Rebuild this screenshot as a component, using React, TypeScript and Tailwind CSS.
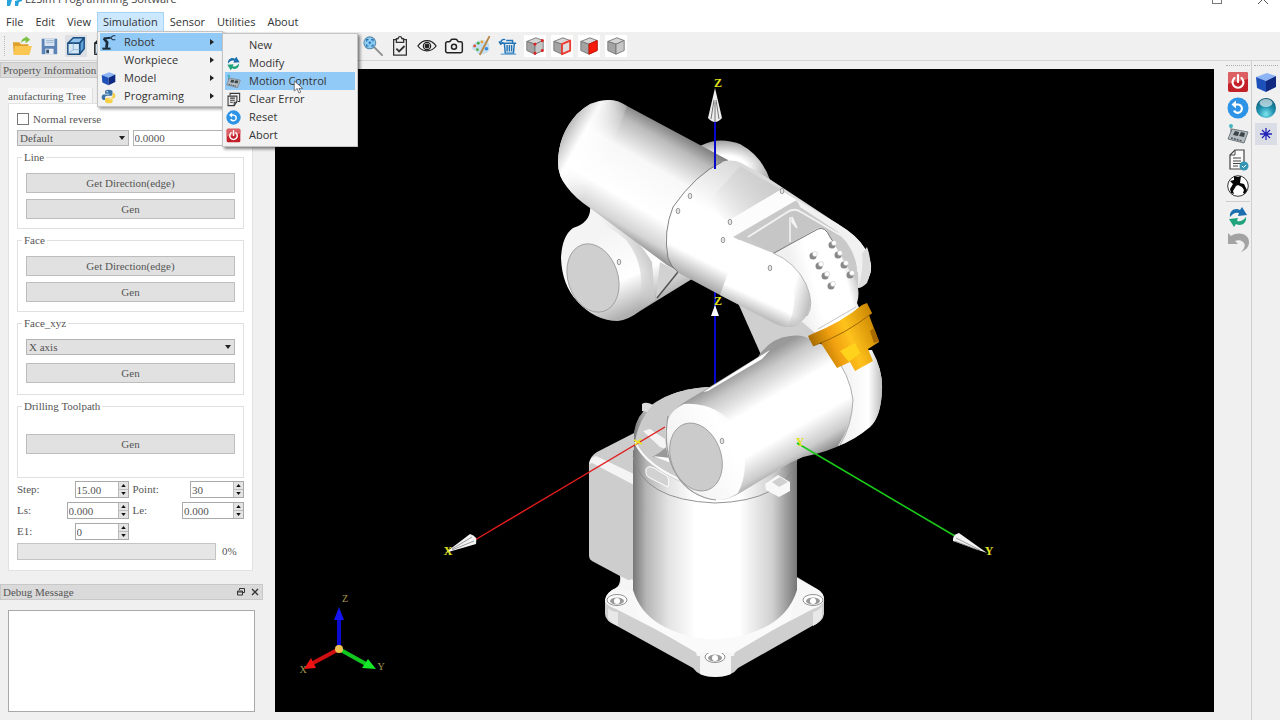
import { ReactNode } from "react";
import clsx from "clsx";
import { Camera } from "lucide-react";

function CubeIcon({
  top,
  left,
  right,
  stroke,
  children,
}: {
  top: string;
  left: string;
  right: string;
  stroke?: string;
  children?: ReactNode;
}) {
  return (
    <svg viewBox="0 0 22 22" className="h-full w-full" stroke={stroke} strokeLinejoin="round">
      <path d="M2 6 12 2l8 3-9 4z" fill={top} />
      <path d="M2 6l9 3v11l-9-4z" fill={left} />
      <path d="M11 9l9-4v11l-9 4z" fill={right} />
      {children}
    </svg>
  );
}

function BlueCube() {
  return (
    <svg viewBox="0 0 22 22" className="h-full w-full">
      <path d="M1 6 12 2l9 3-10 5z" fill="#8db5f5" />
      <path d="M1 6l10 4v11L2 17z" fill="#1d50b8" />
      <path d="M11 10l10-5v11l-10 5z" fill="#0f2a80" />
    </svg>
  );
}

function GreyCube({ children }: { children?: ReactNode }) {
  return (
    <CubeIcon top="#d6d6d6" left="#a3a3a3" right="#c6c6c6" stroke="#777">
      {children}
    </CubeIcon>
  );
}

function WireCube({ color }: { color: string }) {
  return (
    <svg viewBox="0 0 22 22" className="h-full w-full" stroke={color} strokeWidth="1.6" strokeLinejoin="round">
      <path d="M2 8l6-6h12l-5 6z" fill="#8fc1ea" />
      <path d="M15 8l5-6v12l-5 6z" fill="#5fa3da" />
      <path d="M2 8h13v12H2z" fill="#d3e6f6" />
      <path d="M8 8v7h7M8 15l-6 5" fill="none" stroke="#7fa9cc" strokeWidth="0.8" />
    </svg>
  );
}

function FolderIcon() {
  return (
    <svg viewBox="0 0 22 22" className="h-full w-full">
      <path d="M1 7h7l2 2h8v12H2z" fill="#e0a12c" />
      <path d="M3 11h19l-3 10H2z" fill="#fbc751" />
      <path d="M10 8c0-4 3-6 5-6V0l5 4-5 4V5c-2 0-4 1-5 3z" fill="#7ac143" />
    </svg>
  );
}

function SaveIcon() {
  return (
    <svg viewBox="0 0 22 22" className="h-full w-full">
      <path d="M3 3h17v17H3z" fill="#5c83b5" />
      <path d="M6 3h11v8H6z" fill="#d7e3f1" />
      <path d="M7 14h9v6H7z" fill="#e9eef5" />
      <path d="M8 15h3v4H8z" fill="#33506f" />
      <path d="M8 5h8M8 7h8" stroke="#9db5d2" />
    </svg>
  );
}

function MagnifierIcon() {
  return (
    <svg viewBox="0 0 22 22" className="h-full w-full">
      <path d="M12 12l9 9" stroke="#8c8c8c" strokeWidth="2" strokeLinecap="round" />
      <circle cx="7.500" cy="7.500" r="6.500" fill="#8fcdf3" stroke="#5f8fae" strokeWidth="1.2" />
      <path d="M6 4H4v2M9 4h2v2M6 11H4V9M9 11h2V9M6 7.500h3M7.500 6v3" fill="none" stroke="#1f6fb5" strokeWidth="1.200" />
    </svg>
  );
}

function ClipboardIcon() {
  return (
    <svg viewBox="0 0 22 22" className="h-full w-full" fill="none" stroke="#333" strokeWidth="1.400">
      <path d="M8 4H4v17h14V4h-4" />
      <path d="M7 3h2c0-3 4-3 4 0h2v4H7z" />
      <path d="M7 14l3 3 6-6" strokeWidth="2" />
    </svg>
  );
}

function EyeIcon() {
  return (
    <svg viewBox="0 0 22 22" className="h-full w-full" fill="none" stroke="#222" strokeWidth="1.400">
      <path d="M1 11c5-8 15-8 20 0-5 7-15 7-20 0z" />
      <circle cx="11" cy="11" r="4" />
      <circle cx="11" cy="11" r="2" fill="#222" />
    </svg>
  );
}

function PaletteIcon() {
  return (
    <svg viewBox="0 0 22 22" className="h-full w-full">
      <path d="M1 13C2 7 9 4 15 5c5 1 6 6 5 10-1 3-5 5-10 5-4 0-3-3-5-4-2 0-4-1-4-3z" fill="#c4dff0" />
      <circle cx="4" cy="11" r="1.600" fill="#e0503a" />
      <circle cx="8" cy="8" r="1.600" fill="#4ea64b" />
      <circle cx="12" cy="6.500" r="1.600" fill="#f0a030" />
      <circle cx="7" cy="15" r="1.600" fill="#58b04d" />
      <circle cx="17" cy="14" r="2" fill="#3b8edb" />
      <path d="M20 1L10 20" stroke="#b98a4e" strokeWidth="2.200" strokeLinecap="round" />
    </svg>
  );
}

function TrashIcon() {
  return (
    <svg viewBox="0 0 22 22" className="h-full w-full" fill="none" stroke="#1f74b8" strokeWidth="1.600">
      <path d="M5 8h15M7 8l1 11h9l1-11M10 10v7M12.500 10v7M15 10v7M9 5h7v3" />
      <path d="M8 4C5 3 3 5 3 8M1 6l2 3 3-2" />
      <path d="M3 20h17" stroke="#7aaed6" />
    </svg>
  );
}

function PowerIcon() {
  return (
    <svg viewBox="0 0 22 22" className="h-full w-full">
      <rect x="1" y="1" width="20" height="20" rx="2" fill="#c32029" />
      <path d="M1 3a2 2 0 012-2h16a2 2 0 012 2v5C15 10 7 10 1 13z" fill="#dc5f63" />
      <path d="M7.500 7a5.500 5.500 0 107 0M11 4v7" fill="none" stroke="#fff" strokeWidth="2.200" strokeLinecap="round" />
    </svg>
  );
}

function ResetIcon() {
  return (
    <svg viewBox="0 0 22 22" className="h-full w-full">
      <circle cx="11" cy="11" r="10.500" fill="#2c93e6" />
      <path d="M7 7.500h4.500a4.200 4.200 0 11-4.500 6" fill="none" stroke="#fff" strokeWidth="2.200" />
      <path d="M9 3.500v8L4.500 7.500z" fill="#fff" />
    </svg>
  );
}

function RefreshIcon() {
  return (
    <svg viewBox="0 0 22 22" className="h-full w-full">
      <path d="M3 11C2 5 8 1 13 4l2-3 5 8-9 1 1-3c-3-1-6 0-9 4z" fill="#1c6fae" />
      <path d="M19 11c1 6-5 10-10 7l-2 3-5-8 9-1-1 3c3 1 6 0 9-4z" fill="#1fa37c" />
    </svg>
  );
}

function ControllerIcon() {
  return (
    <svg viewBox="0 0 22 22" className="h-full w-full">
      <path d="M5 6l16 3-4 11L1 16z" fill="#b6bdc2" stroke="#6f787d" />
      <path d="M8 8l4 1-1 4-5-1zM14 9l4 1-1 4-5-1z" fill="#3c4448" />
      <path d="M4 15l11 3" stroke="#4d575c" strokeWidth="1.500" strokeDasharray="2 1" />
      <path d="M4 2v7" stroke="#5f6b70" />
      <circle cx="4" cy="3" r="2" fill="#45b5bf" />
    </svg>
  );
}

function DocumentIcon() {
  return (
    <svg viewBox="0 0 22 22" className="h-full w-full">
      <path d="M8 1h9v19H3V6z" fill="#fafafa" stroke="#444" strokeWidth="1.200" />
      <path d="M8 1v5H3M6 9h8M6 12h8M6 14.500h8M6 17h5" fill="none" stroke="#444" />
      <circle cx="17" cy="17" r="4.500" fill="#3495b4" />
      <path d="M15 17l1.500 1.500L19 16" fill="none" stroke="#fff" />
    </svg>
  );
}

function ClearErrorIcon() {
  return (
    <svg viewBox="0 0 22 22" className="h-full w-full" fill="none" stroke="#3a3a3a" strokeWidth="1.600">
      <path d="M6 5V2h14v12h-3" />
      <path d="M3 6h13v8l-4 6H3z" fill="#eee" />
      <path d="M6 9h7M6 12h7M6 15h4M12 20v-5h4" />
    </svg>
  );
}

function GripperIcon() {
  return (
    <svg viewBox="0 0 22 22" className="h-full w-full">
      <circle cx="11" cy="11" r="10.300" fill="#fff" stroke="#222" strokeWidth="0.900" />
      <path d="M7 1l4 1 3-1-1 7 4 1 3 6-2 4-2-1 1-3-2-3-4-2-2 1-3 5 1 3-3-1-1-4 3-5L3 6l4-1z" fill="#050505" />
    </svg>
  );
}

function UndoIcon() {
  return (
    <svg viewBox="0 0 22 22" className="h-full w-full">
      <path d="M1 1l3 3c8-5 18-2 18 6 0 5-3 8-8 10 4-4 5-8 2-10-2-2-5-2-8-1l3 3H1z" fill="#a3a3a3" />
    </svg>
  );
}

function SphereIcon() {
  return (
    <svg viewBox="0 0 22 22" className="h-full w-full">
      <defs>
        <radialGradient id="sphere" cx="0.500" cy="0.800" r="0.800">
          <stop offset="0" stopColor="#7fe6f0" />
          <stop offset="0.500" stopColor="#1f8fae" />
          <stop offset="1" stopColor="#0b5570" />
        </radialGradient>
      </defs>
      <circle cx="11" cy="11" r="10" fill="url(#sphere)" />
      <ellipse cx="11" cy="6" rx="6.500" ry="4" fill="#fff" opacity="0.600" />
    </svg>
  );
}

function PointIcon() {
  return (
    <svg viewBox="0 0 22 22" className="h-full w-full" stroke="#2222b8" strokeWidth="1.300">
      <path d="M11 5v12M5 11h12M7 7l8 8M15 7l-8 8" />
    </svg>
  );
}

function RobotIcon() {
  return (
    <svg viewBox="0 0 22 22" className="h-full w-full" fill="none" stroke="#1c2c3c">
      <path d="M2 20h12" strokeWidth="3" />
      <path d="M8 19l1-8-5-6" strokeWidth="4" />
      <path d="M4 5l10-1" strokeWidth="3" />
      <path d="M14 4l3 3h4M14 4l4-3h3" strokeWidth="1.500" />
    </svg>
  );
}

function PythonIcon() {
  return (
    <svg viewBox="0 0 22 22" className="h-full w-full">
      <path d="M11 1c-4 0-5 1-5 3v3h6v1H4c-2 0-3 2-3 4s1 4 3 4h2v-3c0-2 1-3 3-3h5c2 0 3-1 3-3V4c0-2-2-3-6-3z" fill="#3d74a8" />
      <path d="M12 21c4 0 5-1 5-3v-3h-6v-1h7c2 0 3-2 3-4s-1-4-3-4h-1v4c0 2-1 3-3 3H9c-2 0-3 1-3 3v2c0 2 2 3 6 3z" fill="#f7cf46" />
      <circle cx="9" cy="4" r="1" fill="#fff" />
    </svg>
  );
}

const cubeTool = <WireCube color="#222" />;

const tools: { label: string; icon: ReactNode; active?: boolean; white?: boolean }[] = [
  { label: "Open", icon: <FolderIcon /> },
  { label: "Save", icon: <SaveIcon /> },
  { label: "Isometric view", icon: <WireCube color="#1d4e80" />, active: true },
  { label: "Front view", icon: cubeTool },
  { label: "Back view", icon: cubeTool },
  { label: "Left view", icon: cubeTool },
  { label: "Right view", icon: cubeTool },
  { label: "Top view", icon: cubeTool },
  { label: "Bottom view", icon: cubeTool },
  { label: "Rotate left", icon: cubeTool },
  { label: "Rotate right", icon: cubeTool },
  { label: "Shaded", icon: cubeTool },
  { label: "Wireframe", icon: cubeTool },
  { label: "Zoom to fit", icon: <MagnifierIcon /> },
  { label: "Check list", icon: <ClipboardIcon /> },
  { label: "Visibility", icon: <EyeIcon /> },
  { label: "Capture", icon: <Camera className="h-full w-full" strokeWidth={1.8} color="#222" /> },
  { label: "Appearance", icon: <PaletteIcon /> },
  { label: "Delete", icon: <TrashIcon /> },
  {
    label: "Select vertex",
    white: true,
    icon: (
      <GreyCube>
        <path d="M10 8h2v2h-2zM18 4h2v2h-2zM10 18h2v2h-2zM18 15h2v2h-2z" fill="#e02020" stroke="#e02020" />
      </GreyCube>
    ),
  },
  {
    label: "Select edge",
    white: true,
    icon: (
      <GreyCube>
        <path d="M11 9l9-4v11l-9 4z" fill="#ddd" stroke="#ee3b32" strokeWidth="2" />
      </GreyCube>
    ),
  },
  {
    label: "Select face",
    white: true,
    icon: (
      <GreyCube>
        <path d="M11 9l9-4v11l-9 4z" fill="#f51c0c" stroke="#d01000" />
      </GreyCube>
    ),
  },
  { label: "Select solid", white: true, icon: <GreyCube /> },
];

function MenuItem({
  icon,
  label,
  active,
  arrow,
  children,
}: {
  icon?: ReactNode;
  label: string;
  active?: boolean;
  arrow?: boolean;
  children?: ReactNode;
}) {
  return (
    <li className="relative">
      <button
        className={clsx("flex h-[18px] w-full items-center pr-2 text-left", active && "bg-[#91c9f7]")}
      >
        <span className="ml-px mr-2 h-[15px] w-[15px] shrink-0">{icon}</span>
        <span className="flex-1">{label}</span>
        {arrow && (
          <svg viewBox="0 0 4 6" className="h-1.5 w-1">
            <path d="M0 0l4 3-4 3z" fill="#222" />
          </svg>
        )}
      </button>
      {children}
    </li>
  );
}

function RobotMenu() {
  return (
    <ul className="absolute left-full top-0 w-[136px] border border-[#c4c4c4] bg-[#f2f2f2] px-0.5 py-0.5 shadow-[2px_2px_3px_rgba(0,0,0,0.5)]">
      <MenuItem label="New" />
      <MenuItem label="Modify" icon={<RefreshIcon />} />
      <MenuItem label="Motion Control" icon={<ControllerIcon />} active>
        <svg viewBox="0 0 10 15" className="absolute left-[68px] top-2 z-10 h-3.5 w-2.5">
          <path d="M1 1v11l3-3 2 5 2-1-2-4h4z" fill="#fff" stroke="#555" strokeWidth="0.800" />
        </svg>
      </MenuItem>
      <MenuItem label="Clear Error" icon={<ClearErrorIcon />} />
      <MenuItem label="Reset" icon={<ResetIcon />} />
      <MenuItem label="Abort" icon={<PowerIcon />} />
    </ul>
  );
}

function SimulationMenu() {
  return (
    <ul className="absolute left-0 top-full z-20 -mt-px w-[126px] border border-[#c4c4c4] bg-[#f2f2f2] py-px pl-0.5 shadow-[2px_2px_3px_rgba(0,0,0,0.4)]">
      <MenuItem label="Robot" icon={<RobotIcon />} active arrow>
        <RobotMenu />
      </MenuItem>
      <MenuItem label="Workpiece" arrow />
      <MenuItem label="Model" icon={<BlueCube />} arrow />
      <MenuItem label="Programing" icon={<PythonIcon />} arrow />
    </ul>
  );
}

function TitleBar() {
  return (
    <header className="flex h-3 items-end overflow-hidden bg-white pl-[7px] pr-3 text-[11px] leading-5 text-[#444]">
      <svg viewBox="0 0 15 14" className="mb-1.5 h-3.5 w-[15px]" fill="#27a4dc">
        <path d="M0 5h9v3H5l-2 6H0zM8 9l7-2v2l-3 1-1 4H8z" />
      </svg>
      <h1 className="mb-[3px] ml-[3px] flex-1">EzSim Programming Software</h1>
      <button aria-label="Maximize" className="mb-2 mr-9 h-2.5 w-2.5 border border-[#777]" />
      <button aria-label="Close" className="mb-2 h-2.5 w-2.5">
        <svg viewBox="0 0 10 10" stroke="#555">
          <path d="M0 0l10 10M10 0L0 10" />
        </svg>
      </button>
    </header>
  );
}

function MenuBar() {
  return (
    <nav className="flex h-5 bg-white text-[11px] text-[#333]">
      {["File", "Edit", "View", "Simulation", "Sensor", "Utilities", "About"].map((label) => (
        <div key={label} className="relative">
          <button
            className={clsx(
              "h-full border px-[5px]",
              label === "Simulation" ? "border-[#a6d2f3] bg-[#cce8ff]" : "border-transparent",
            )}
          >
            {label}
          </button>
          {label === "Simulation" && <SimulationMenu />}
        </div>
      ))}
    </nav>
  );
}

function ToolBar() {
  return (
    <div className="flex h-[29px] items-center gap-[5px] border-b border-[#d4d4d4] bg-[#f0f0f0] pl-1">
      <div className="mr-px h-5 border-l border-dotted border-[#bbb]" />
      {tools.map(({ label, icon, active, white }) => (
        <button
          key={label}
          aria-label={label}
          className={clsx(
            "h-[22px] w-[22px] shrink-0 p-px",
            active && "bg-[#dcdfe3]",
            white && "bg-white",
          )}
        >
          {icon}
        </button>
      ))}
    </div>
  );
}

function DockTitle({ title }: { title: string }) {
  return (
    <div className="flex h-4 items-center gap-1 border border-[#c8c8c8] bg-[#dadada] pl-0.5 pr-0.5">
      <h2 className="flex-1 whitespace-nowrap">{title}</h2>
      <button aria-label={`Float ${title}`} className="h-2.5 w-2.5">
        <svg viewBox="0 0 10 10" fill="none" stroke="#333">
          <path d="M3.500 3V1.500h5v4H7M1.500 4h5v4h-5zM1.500 5h5" />
        </svg>
      </button>
      <button aria-label={`Close ${title}`} className="h-2.5 w-2.5">
        <svg viewBox="0 0 10 10" stroke="#333" strokeWidth="1.300">
          <path d="M2 2l6 6M8 2L2 8" />
        </svg>
      </button>
    </div>
  );
}

function PanelButton({ children }: { children: ReactNode }) {
  return <button className="h-5 w-full border border-[#bdbdbd] bg-[#e1e1e1]">{children}</button>;
}

function Select({ label, value }: { label: string; value: string }) {
  return (
    <div className="relative h-4">
      <select
        aria-label={label}
        className="h-full w-full appearance-none border border-[#b4b4b4] bg-[#e1e1e1] pl-0.5 leading-3"
      >
        <option>{value}</option>
      </select>
      <svg viewBox="0 0 6 4" className="pointer-events-none absolute right-1 top-1.5 h-1 w-1.5">
        <path d="M0 0h6L3 4z" fill="#222" />
      </svg>
    </div>
  );
}

function Group({ title, children }: { title: string; children: ReactNode }) {
  return (
    <fieldset className="h-20 border border-[#e0e0e0] px-2">
      <legend className="-ml-1 px-0.5 leading-4">{title}</legend>
      <div className="flex flex-col">{children}</div>
    </fieldset>
  );
}

function SpinBox({ id, label, value, wide }: { id: string; label: string; value: string; wide?: boolean }) {
  return (
    <div className="flex h-[17px] items-center justify-between">
      <label htmlFor={id}>{label}</label>
      <div className={clsx("flex h-full border border-[#a9a9a9]", wide ? "w-[62px]" : "w-[54px]")}>
        <input id={id} defaultValue={value} className="w-full min-w-0 flex-1 bg-white pl-px" />
        <div className="flex w-2.5 flex-col border-l border-[#bbb] bg-[#e4e4e4]">
          <button aria-label={`Increase ${label}`} className="flex flex-1 items-center justify-center">
            <svg viewBox="0 0 6 4" className="h-[3px] w-[5px]">
              <path d="M0 4h6L3 0z" fill="#111" />
            </svg>
          </button>
          <button
            aria-label={`Decrease ${label}`}
            className="flex flex-1 items-center justify-center border-t border-[#bbb]"
          >
            <svg viewBox="0 0 6 4" className="h-[3px] w-[5px]">
              <path d="M0 0h6L3 4z" fill="#111" />
            </svg>
          </button>
        </div>
      </div>
    </div>
  );
}

function PropertyPanel() {
  return (
    <section className="flex flex-col">
      <DockTitle title="Property Information" />
      <div className="ml-2 mr-2.5 mt-2.5">
        <div className="flex h-[15px]">
          <button className="w-[85px] overflow-hidden whitespace-nowrap border-r border-[#ddd] bg-[#f7f7f7] text-left leading-4">
            anufacturing Tree
          </button>
        </div>
        <div className="flex flex-col gap-[3px] border border-[#e2e2e2] bg-white px-2 pb-2.5 pt-[7px]">
          <label className="flex h-4 items-center gap-1">
            <input type="checkbox" className="h-3 w-3 appearance-none border border-[#777] bg-white" />
            Normal reverse
          </label>
          <div className="grid grid-cols-2 gap-1">
            <Select label="Plane" value="Default" />
            <input
              aria-label="Offset"
              defaultValue="0.0000"
              className="h-4 min-w-0 border border-[#b4b4b4] bg-white pl-px"
            />
          </div>
          <Group title="Line">
            <div className="mt-2">
              <PanelButton>Get Direction(edge)</PanelButton>
            </div>
            <div className="mt-1.5">
              <PanelButton>Gen</PanelButton>
            </div>
          </Group>
          <Group title="Face">
            <div className="mt-2">
              <PanelButton>Get Direction(edge)</PanelButton>
            </div>
            <div className="mt-1.5">
              <PanelButton>Gen</PanelButton>
            </div>
          </Group>
          <Group title="Face_xyz">
            <div className="mt-2">
              <Select label="Axis" value="X axis" />
            </div>
            <div className="mt-2">
              <PanelButton>Gen</PanelButton>
            </div>
          </Group>
          <Group title="Drilling Toolpath">
            <div className="mt-5">
              <PanelButton>Gen</PanelButton>
            </div>
          </Group>
          <div className="grid grid-cols-2 gap-1">
            <SpinBox id="step" label="Step:" value="15.00" />
            <SpinBox id="point" label="Point:" value="30" />
            <SpinBox id="ls" label="Ls:" value="0.000" wide />
            <SpinBox id="le" label="Le:" value="0.000" wide />
            <SpinBox id="e1" label="E1:" value="0" />
          </div>
          <div className="flex items-center gap-1.5">
            <div
              role="progressbar"
              aria-label="Progress"
              aria-valuenow={0}
              className="h-[17px] flex-1 border border-[#c4c4c4] bg-[#e6e6e6]"
            />
            <span className="w-[22px]">0%</span>
          </div>
        </div>
      </div>
    </section>
  );
}

function DebugPanel() {
  return (
    <section className="mt-[13px] flex min-h-0 flex-1 flex-col">
      <DockTitle title="Debug Message" />
      <textarea
        aria-label="Debug Message"
        className="mb-2 ml-2 mr-2 mt-2.5 min-h-0 flex-1 resize-none border border-[#a9a9a9] bg-white"
      />
    </section>
  );
}

// [x, y] of the screws on the upper arm housing
const screws = [
  [678, 211],
  [690, 196],
  [723, 240],
  [730, 222],
  [770, 268],
  [782, 191],
  [619, 262],
  [722, 441],
];

const wristBolts = [
  [813, 256],
  [819, 266],
  [825, 276],
  [831, 286],
  [832, 245],
  [838, 255],
  [844, 265],
  [850, 275],
];

function Scene() {
  return (
    <svg viewBox="275 69 939 643" className="h-full w-full" fontFamily="'Liberation Serif', serif">
      <defs>
        <linearGradient id="base" x1="633" x2="797" y1="0" y2="0" gradientUnits="userSpaceOnUse">
          <stop offset="0" stopColor="#777" />
          <stop offset="0.080" stopColor="#b5b5b5" />
          <stop offset="0.220" stopColor="#e4e4e4" />
          <stop offset="0.380" stopColor="#fff" />
          <stop offset="0.650" stopColor="#fff" />
          <stop offset="0.850" stopColor="#d0d0d0" />
          <stop offset="1" stopColor="#777" />
        </linearGradient>
        <linearGradient id="lower" x1="732" y1="374" x2="790" y2="474" gradientUnits="userSpaceOnUse">
          <stop offset="0" stopColor="#999" />
          <stop offset="0.120" stopColor="#c8c8c8" />
          <stop offset="0.350" stopColor="#fff" />
          <stop offset="0.680" stopColor="#fff" />
          <stop offset="0.880" stopColor="#ccc" />
          <stop offset="1" stopColor="#8a8a8a" />
        </linearGradient>
        <linearGradient id="lowerCap" x1="666" y1="470" x2="748" y2="428" gradientUnits="userSpaceOnUse">
          <stop offset="0" stopColor="#c8c8c8" />
          <stop offset="0.200" stopColor="#f4f4f4" />
          <stop offset="0.750" stopColor="#fff" />
          <stop offset="1" stopColor="#fff" stopOpacity="0" />
        </linearGradient>
        <linearGradient id="elbow" x1="845" y1="0" x2="884" y2="0" gradientUnits="userSpaceOnUse">
          <stop offset="0" stopColor="#f2f2f2" />
          <stop offset="0.600" stopColor="#fff" />
          <stop offset="1" stopColor="#b4b4b4" />
        </linearGradient>
        <linearGradient id="upper" x1="674" y1="130" x2="614" y2="234" gradientUnits="userSpaceOnUse">
          <stop offset="0" stopColor="#808080" />
          <stop offset="0.120" stopColor="#bbb" />
          <stop offset="0.350" stopColor="#f8f8f8" />
          <stop offset="0.700" stopColor="#fff" />
          <stop offset="0.900" stopColor="#d4d4d4" />
          <stop offset="1" stopColor="#909090" />
        </linearGradient>
        <linearGradient id="upperCap" x1="556" y1="140" x2="602" y2="166" gradientUnits="userSpaceOnUse">
          <stop offset="0" stopColor="#aaa" />
          <stop offset="0.400" stopColor="#fff" stopOpacity="0.900" />
          <stop offset="1" stopColor="#fff" stopOpacity="0" />
        </linearGradient>
        <linearGradient id="fork" x1="745" y1="165" x2="688" y2="278" gradientUnits="userSpaceOnUse">
          <stop offset="0" stopColor="#d8d8d8" />
          <stop offset="0.250" stopColor="#ededed" />
          <stop offset="0.450" stopColor="#fff" />
          <stop offset="0.820" stopColor="#fff" />
          <stop offset="1" stopColor="#aaa" />
        </linearGradient>
        <linearGradient id="forkShade" x1="712" y1="205" x2="775" y2="182" gradientUnits="userSpaceOnUse">
          <stop offset="0" stopColor="#ccc" stopOpacity="0" />
          <stop offset="1" stopColor="#ccc" />
        </linearGradient>
        <linearGradient id="finger" x1="790" y1="265" x2="764" y2="322" gradientUnits="userSpaceOnUse">
          <stop offset="0" stopColor="#fff" />
          <stop offset="0.700" stopColor="#fff" />
          <stop offset="1" stopColor="#aaa" />
        </linearGradient>
        <linearGradient id="fingerEnd" x1="790" y1="300" x2="812" y2="306" gradientUnits="userSpaceOnUse">
          <stop offset="0" stopColor="#bbb" stopOpacity="0" />
          <stop offset="1" stopColor="#b4b4b4" />
        </linearGradient>
        <linearGradient id="motor" x1="620" y1="225" x2="655" y2="302" gradientUnits="userSpaceOnUse">
          <stop offset="0" stopColor="#f4f4f4" />
          <stop offset="0.600" stopColor="#fff" />
          <stop offset="1" stopColor="#b0b0b0" />
        </linearGradient>
        <linearGradient id="motorShade" x1="620" y1="262" x2="656" y2="246" gradientUnits="userSpaceOnUse">
          <stop offset="0" stopColor="#ccc" stopOpacity="0" />
          <stop offset="0.700" stopColor="#ccc" />
          <stop offset="1" stopColor="#eee" />
        </linearGradient>
        <linearGradient id="wrist" x1="800" y1="300" x2="860" y2="284" gradientUnits="userSpaceOnUse">
          <stop offset="0" stopColor="#f0f0f0" />
          <stop offset="0.300" stopColor="#fff" />
          <stop offset="0.800" stopColor="#fff" />
          <stop offset="1" stopColor="#c4c4c4" />
        </linearGradient>
        <linearGradient id="gold" x1="812" y1="345" x2="876" y2="318" gradientUnits="userSpaceOnUse">
          <stop offset="0" stopColor="#a86c00" />
          <stop offset="0.300" stopColor="#f0a010" />
          <stop offset="0.550" stopColor="#ffc21c" />
          <stop offset="1" stopColor="#c88200" />
        </linearGradient>
        <radialGradient id="dome" cx="0.350" cy="0.700" r="0.800">
          <stop offset="0.400" stopColor="#fff" />
          <stop offset="1" stopColor="#888" />
        </radialGradient>
        <linearGradient id="fade" x1="0" x2="0" y1="590" y2="632" gradientUnits="userSpaceOnUse">
          <stop offset="0" stopColor="#fff" stopOpacity="0" />
          <stop offset="1" stopColor="#fafafa" />
        </linearGradient>
      </defs>

      {/* base plate */}
      <path
        d="M605 600Q606 592 618 587Q621 580 620 576L633 570H797V577L817 589Q825 593 824 602V614Q823 622 812 626L738 668Q732 677 715 677Q699 677 693 668L617 626Q605 621 605 614z"
        fill="#cfcfcf"
      />
      <path
        d="M605 600Q606 592 618 587L633 578H797L817 589Q824 593 824 600Q823 606 813 609L740 647Q734 651 734 656H697Q696 650 690 647L616 609Q606 606 605 600z"
        fill="#f7f7f7"
      />
      <path d="M700 654Q715 644 731 654V674Q715 680 700 674z" fill="#f6f6f6" />
      <path d="M608 608Q612 612 618 612V626Q609 622 608 618zM813 612Q819 611 822 606V617Q819 623 813 626z" fill="#e8e8e8" />
      {[
        [617, 600],
        [813, 600],
        [715, 657],
      ].map(([x, y]) => (
        <g key={x}>
          <ellipse cx={x} cy={y} rx="10" ry="5.500" fill="#fff" stroke="#777" strokeWidth="0.800" />
          <ellipse cx={x} cy={y + 1} rx="7" ry="3.500" fill="#999" />
          <ellipse cx={x} cy={y + 1} rx="3" ry="3" fill="#fff" />
        </g>
      ))}

      {/* rear box */}
      <path d="M589 464Q590 456 597 452L640 430L660 470V588L620 576L592 561Q589 559 589 556z" fill="#cdcdcd" />
      <path d="M589 464Q590 457 596 456L634 474V485L592 463z" fill="#f4f4f4" />
      <path d="M620 576L634 583V592L616 588Q623 583 620 576z" fill="#f5f5f5" />

      {/* base column */}
      <path d="M633 450V590Q646 634 715 640Q784 634 797 590V450z" fill="url(#base)" />
      <path d="M633 590Q646 634 715 640Q784 634 797 590L790 620L734 653H697L640 620z" fill="url(#fade)" />
      <path d="M634 455V432Q637 414 650 406Q676 387 715 387Q790 392 797 450V462Q775 500 715 503Q650 498 633 455z" fill="url(#base)" />
      <path d="M635 442Q640 411 665 397Q690 386 715 387Q760 390 780 410V470L700 490Q645 470 635 442z" fill="#cbcbcb" />
      <path d="M635 442Q645 466 690 484" fill="none" stroke="#fafafa" strokeWidth="2" />
      <path d="M633 456Q642 500 715 503Q784 501 797 460" fill="none" stroke="#888" strokeWidth="0.900" />
      <path d="M642 411V404Q646 401 653 405L647 412z" fill="#ddd" />
      <path d="M643 431L650 429L668 441V450L660 447z" fill="#f4f4f4" />
      <path d="M652 457Q662 452 668 445V458z" fill="#999" />
      <path d="M653 456L670 458L674 464z" fill="#fff" />
      <path d="M646 469Q648 465 654 468L667 476Q670 480 668 487L650 478Q645 476 646 469z" fill="#d2d2d2" stroke="#fff" />
      <path d="M765 484L778 475L790 482V491L779 497L766 490z" fill="#f8f8f8" />
      <path d="M772 482L780 477L788 482L779 487z" fill="#d0d0d0" />

      {/* link behind the upper arm */}
      <path d="M738 303L762 357L800 345L822 330L790 310z" fill="#cfcfcf" />

      <path d="M715 292V386" stroke="#0808c8" strokeWidth="2" />
      <path d="M711 316L715 305L719 316z" fill="#fff" />

      {/* lower arm */}
      <path
        d="M665 433Q666 415 683 403L703 391L758 357Q770 338 790 336Q804 334 812 341L845 352L872 352Q883 370 882 390Q881 417 870 427L845 443Q828 452 803 457L790 463L740 493Q726 501 716 500Q690 497 675 474Q665 455 665 433z"
        fill="url(#lower)"
      />
      <path d="M832 352Q850 375 853 400Q852 425 838 446Q855 440 870 427Q881 417 882 390Q883 370 872 350z" fill="url(#elbow)" />
      <path d="M832 352Q850 375 853 400Q852 425 840 445" fill="none" stroke="#999" strokeWidth="0.800" />
      <path d="M703 392L770 350L762 359L708 391z" fill="#fff" />
      <path
        d="M665 433Q666 412 684 404Q718 402 738 430Q752 465 738 493Q726 501 716 500Q690 497 675 474Q665 455 665 433z"
        fill="url(#lowerCap)"
      />
      <path d="M668 416Q662 450 676 474Q690 497 716 500" fill="none" stroke="#999" strokeWidth="1.200" />
      <ellipse cx="696" cy="457" rx="25" ry="35" transform="rotate(-20 696 457)" fill="#cbcbcb" stroke="#999" strokeWidth="0.800" />

      {/* rear dome and motor */}
      <path d="M700 146Q718 136 740 144Q762 156 770 180L730 170z" fill="url(#dome)" />
      <path
        d="M590 205Q592 222 573 228Q562 236 561 258Q562 285 577 301Q595 321 618 321Q628 320 640 311L692 279L660 235z"
        fill="url(#motor)"
      />
      <path d="M592 215Q628 222 652 262L655 300L636 312Q650 270 626 240Q610 225 590 222z" fill="url(#motorShade)" />
      <path d="M660 262L678 272L656 298z" fill="#d2d2d2" />
      <path d="M678 272L657 298" stroke="#555" strokeWidth="1.500" />
      <ellipse cx="593" cy="278" rx="25" ry="35" transform="rotate(-18 593 278)" fill="#cfcfcf" stroke="#999" strokeWidth="0.800" />

      {/* upper arm */}
      <path
        d="M558 163Q558 135 577 114Q592 99 610 100Q618 100 627 106L728 160L740 200L690 278L667 265L590 208Q575 198 567 187Q558 176 558 163z"
        fill="url(#upper)"
      />
      <path d="M558 163Q558 135 577 114Q592 99 610 100Q618 100 627 106L590 208Q575 198 567 187Q558 176 558 163z" fill="url(#upperCap)" />
      <path
        d="M722 162Q733 158 745 165L768 178L847 230Q868 245 871 265Q872 280 860 287L812 297Q810 326 790 327Q780 327 770 320L720 295L677 272Q664 259 666 237Q672 190 722 162z"
        fill="url(#fork)"
      />
      <path d="M722 162Q696 174 673 207Q663 232 668 258Q671 267 678 272" fill="none" stroke="#777" strokeWidth="0.900" />
      <path d="M706 204L740 166L782 190L728 222z" fill="url(#forkShade)" />
      <path d="M726 222L780 190L797 200L733 237z" fill="#fcfcfc" />
      <path d="M733 237L795 201L845 229Q866 246 858 288L845 285L788 264z" fill="#c9c9c9" />
      <path d="M747 237L786 213Q794 207 801 212L835 233L775 255z" fill="#c6c6c6" />
      <path d="M790 217V242M792 217L797 228L792 222z" stroke="#f4f4f4" strokeWidth="1.500" fill="#f4f4f4" />
      <path d="M748 237L786 213Q794 207 801 212L842 236Q858 250 858 272" fill="none" stroke="#f2f2f2" strokeWidth="1.800" />
      <path d="M838 224L847 230Q868 245 871 265Q872 280 858 288Q861 255 838 232L800 207L797 200z" fill="#f1f1f1" />
      <path d="M867 247Q874 266 867 283Q862 288 858 288Q864 268 862 254z" fill="#ddd" />

      {/* wrist */}
      <path
        d="M775 253L818 228Q825 226 830 237L857 283Q860 294 857 303L862 314L822 339L800 320z"
        fill="url(#wrist)"
      />
      <path d="M774 253L818 229Q825 226 830 237L834 243" fill="none" stroke="#777" />
      <path d="M818 329L856 307" stroke="#c4c4c4" />
      {wristBolts.map(([x, y]) => (
        <g key={`${x}-${y}`}>
          <ellipse cx={x} cy={y} rx="3.500" ry="3.500" fill="#888" />
          <ellipse cx={x + 2} cy={y - 2} rx="2.500" ry="2.500" fill="#fff" stroke="#bbb" strokeWidth="0.500" />
        </g>
      ))}

      {/* near fork finger */}
      <path
        d="M740 240L773 253Q795 262 806 284Q815 305 805 318Q798 327 787 327Q778 326 768 320L720 295z"
        fill="url(#finger)"
      />
      <path d="M790 264Q800 270 806 284Q815 305 805 318Q798 327 787 327Q800 305 790 264z" fill="url(#fingerEnd)" />
      <path d="M773 253Q795 262 806 284Q815 305 807 316" fill="none" stroke="#aaa" strokeWidth="0.800" />
      {screws.map(([x, y]) => (
        <ellipse key={`${x}-${y}`} cx={x} cy={y} rx="1.800" ry="2.800" fill="#e4e4e4" stroke="#888" strokeWidth="0.800" />
      ))}

      {/* tool flange */}
      <path d="M821 343L869 315L879 342L868 349L873 361L855 371L850 362L837 368z" fill="url(#gold)" />
      <path d="M808 336L812 334Q842 322 862 305L867 303L872 313Q846 334 813 346z" fill="url(#gold)" />
      <path d="M813 346Q846 334 872 313" fill="none" stroke="#a06800" />
      <path d="M840 351L855 343L860 353L849 362z" fill="#ffd21c" />
      <path d="M870 331L874 328L879 341L874 343z" fill="#a86a00" />

      {/* axes */}
      <path d="M715 122V169" stroke="#0808c8" strokeWidth="2" />
      <path d="M708 118L715 88L722 118Q715 126 708 118z" fill="#eee" />
      <path d="M711 119L714 100M719 119L716 100M715 122V102" stroke="#555" strokeWidth="0.800" />
      <path d="M665 427L475 540" stroke="#e01c1c" strokeWidth="1.400" />
      <path d="M445 553L470 534Q478 536 476 544z" fill="#f4f4f4" />
      <path d="M452 549L472 537M452 550L474 541" stroke="#888" strokeWidth="0.800" />
      <path d="M797 443L960 539" stroke="#18c818" strokeWidth="1.600" />
      <path d="M987 553L953 541Q952 535 959 533z" fill="#f4f4f4" />
      <path d="M980 550L956 538M978 550L955 541" stroke="#888" strokeWidth="0.800" />
      <path d="M634 440L642 444M635 445L641 439" stroke="#e8e020" strokeWidth="1.500" />
      <g fill="#e0e020" fontSize="12" fontWeight="bold" textAnchor="middle">
        <text x="718" y="87">Z</text>
        <text x="718" y="305">Z</text>
        <text x="448" y="555">X</text>
        <text x="800" y="446">Y</text>
        <text x="989" y="555">Y</text>
      </g>

      {/* orientation triad */}
      <g strokeWidth="4">
        <path d="M339 649V618" stroke="#0a0ad0" />
        <path d="M339 649L313 663" stroke="#d01010" />
        <path d="M339 649L366 664" stroke="#10c820" />
      </g>
      <path d="M334 620L339 607L344 620z" fill="#1414f0" />
      <path d="M311 658L304 669L316 668z" fill="#f01414" />
      <path d="M368 659L376 669L362 668z" fill="#14e828" />
      <circle cx="339" cy="649" r="4" fill="#f0c050" />
      <g fill="#a89a50" fontSize="10" textAnchor="middle">
        <text x="345" y="602">Z</text>
        <text x="303" y="673">X</text>
        <text x="381" y="670">Y</text>
      </g>
    </svg>
  );
}

function SideButton({ label, active, children }: { label: string; active?: boolean; children: ReactNode }) {
  return (
    <button aria-label={label} className={clsx("h-[22px] w-[22px] shrink-0", active && "bg-[#dbdde6]")}>
      {children}
    </button>
  );
}

function SideBars() {
  return (
    <>
      <aside className="flex w-7 flex-col items-center gap-1 border-r border-[#cfcfcf] pt-1">
        <div className="mb-px w-6 border-t border-dotted border-[#aaa]" />
        <SideButton label="Abort">
          <PowerIcon />
        </SideButton>
        <SideButton label="Reset">
          <ResetIcon />
        </SideButton>
        <SideButton label="Motion Control">
          <ControllerIcon />
        </SideButton>
        <SideButton label="Report">
          <DocumentIcon />
        </SideButton>
        <SideButton label="Gripper">
          <GripperIcon />
        </SideButton>
        <div className="w-6 border-t border-[#cfcfcf]" />
        <SideButton label="Modify">
          <RefreshIcon />
        </SideButton>
        <SideButton label="Undo">
          <UndoIcon />
        </SideButton>
      </aside>
      <aside className="flex w-7 flex-col items-center gap-1 pt-1">
        <div className="mb-px w-6 border-t border-dotted border-[#aaa]" />
        <SideButton label="Solid">
          <BlueCube />
        </SideButton>
        <SideButton label="Sphere">
          <SphereIcon />
        </SideButton>
        <SideButton label="Point" active>
          <PointIcon />
        </SideButton>
      </aside>
    </>
  );
}

export default function App() {
  return (
    <div className="flex h-screen flex-col overflow-hidden bg-[#f0f0f0] font-['Open_Sans','Noto_Sans',sans-serif]">
      <TitleBar />
      <MenuBar />
      <ToolBar />
      <div className="flex min-h-0 flex-1">
        <div className="mr-3 flex w-[263px] shrink-0 flex-col pt-px font-['Liberation_Serif',serif] text-[11px] leading-none text-[#555]">
          <PropertyPanel />
          <DebugPanel />
        </div>
        <main className="my-2 mr-2.5 min-w-0 flex-1 bg-black">
          <Scene />
        </main>
        <SideBars />
      </div>
    </div>
  );
}
